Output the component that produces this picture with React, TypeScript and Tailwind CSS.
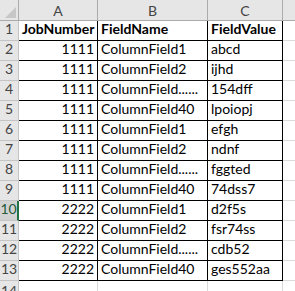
import React from "react";

type Row = [string, string, string];

const rows: Row[] = [
  ["1111", "ColumnField1", "abcd"],
  ["1111", "ColumnField2", "ijhd"],
  ["1111", "ColumnField......", "154dff"],
  ["1111", "ColumnField40", "lpoiopj"],
  ["1111", "ColumnField1", "efgh"],
  ["1111", "ColumnField2", "ndnf"],
  ["1111", "ColumnField......", "fggted"],
  ["1111", "ColumnField40", "74dss7"],
  ["2222", "ColumnField1", "d2f5s"],
  ["2222", "ColumnField2", "fsr74ss"],
  ["2222", "ColumnField......", "cdb52"],
  ["2222", "ColumnField40", "ges552aa"],
];

const font = { fontFamily: "Lato, 'Liberation Sans', sans-serif" };

const App = () => {
  return (
    <div
      className="w-[295px] h-[291px] overflow-hidden bg-white text-black"
      style={font}
    >
      <div className="grid grid-cols-[19px_79px_110px_75px_1fr] grid-rows-[21px_repeat(14,20px)]">
        {/* corner */}
        <div className="relative bg-[#e6e6e6] border-r border-b border-[#ababab]">
          <svg
            className="absolute right-[2px] bottom-[2px]"
            width="11"
            height="11"
            viewBox="0 0 11 11"
          >
            <polygon points="11,0 11,11 0,11" fill="#c6c6c6" />
          </svg>
        </div>
        {["A", "B", "C"].map((c) => (
          <div
            key={c}
            className="flex items-center justify-center bg-[#e6e6e6] border-r border-b border-[#ababab] text-[14px] text-[#444]"
          >
            {c}
          </div>
        ))}
        <div className="bg-[#e6e6e6] border-b border-[#ababab]" />

        {/* header row 1 */}
        <div className="flex items-end justify-center pb-[1px] bg-[#e6e6e6] border-r border-b border-[#c4c4c4] text-[14px] text-[#444]">
          1
        </div>
        <div className="flex items-end px-[3px] pb-[1px] border-r border-b border-black text-[14px] font-bold">
          JobNumber
        </div>
        <div className="flex items-end px-[3px] pb-[1px] border-r border-b border-black text-[14px] font-bold">
          FieldName
        </div>
        <div className="flex items-end px-[3px] pb-[1px] border-r border-b border-black text-[14px] font-bold">
          FieldValue
        </div>
        <div className="border-b border-[#dadada]" />

        {rows.map((r, i) => {
          const n = i + 2;
          const active = n === 10;
          return (
            <React.Fragment key={n}>
              <div
                className={
                  active
                    ? "flex items-end justify-center pb-[1px] bg-[#d2d2d2] border-r-2 border-r-[#217346] border-b border-b-[#c4c4c4] text-[14px] text-[#235a3a]"
                    : "flex items-end justify-center pb-[1px] bg-[#e6e6e6] border-r border-b border-[#c4c4c4] text-[14px] text-[#444]"
                }
              >
                {n}
              </div>
              <div className="flex items-end justify-end px-[3px] pb-[1px] border-r border-b border-black text-[14px]">
                {r[0]}
              </div>
              <div className="flex items-end px-[3px] pb-[1px] border-r border-b border-black text-[14px] whitespace-nowrap">
                {r[1]}
              </div>
              <div className="flex items-end px-[3px] pb-[1px] border-r border-b border-black text-[14px]">
                {r[2]}
              </div>
              <div className="border-b border-[#dadada]" />
            </React.Fragment>
          );
        })}

        {/* row 14 */}
        <div className="flex items-end justify-center bg-[#e6e6e6] border-r border-[#c4c4c4] text-[14px] text-[#444]">
          14
        </div>
        <div className="border-r border-[#dadada]" />
        <div className="border-r border-[#dadada]" />
        <div className="border-r border-[#dadada]" />
        <div />
      </div>
    </div>
  );
};

export default App;
